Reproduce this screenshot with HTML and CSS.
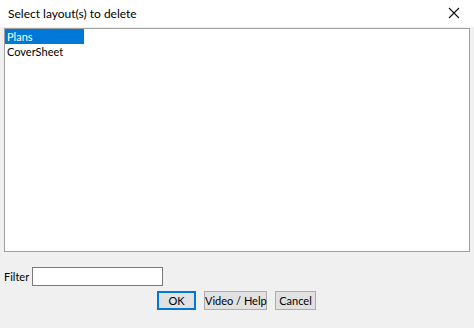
FILE: index.html
```html
<!DOCTYPE html>
<html>
<head>
<meta charset="utf-8">
<link rel="stylesheet" href="styles.css">
</head>
<body>
<div class="window">
  <div class="titlebar">
    <span class="title">Select layout(s) to delete</span>
    <svg class="close" width="12" height="12" viewBox="0 0 12 12"><path d="M1 1 L11 11 M11 1 L1 11" stroke="#111" stroke-width="1.1" fill="none"/></svg>
  </div>
  <div class="content">
    <div class="listbox">
      <div class="item selected">Plans</div>
      <div class="item">CoverSheet</div>
    </div>
    <div class="filter-row">
      <label class="filter-label">Filter</label>
      <div class="filter-input"></div>
    </div>
    <div class="button-row">
      <div class="btn default">OK</div>
      <div class="btn help">Video / Help</div>
      <div class="btn cancel">Cancel</div>
    </div>
  </div>
</div>
</body>
</html>
```
FILE: styles.css
```css
html, body {
  margin: 0;
  padding: 0;
}
body {
  font-family: Lato, "Noto Sans", sans-serif;
  font-size: 11px;
  color: #000;
  background: #f0f0f0;
  width: 474px;
  height: 328px;
  overflow: hidden;
}
.window {
  width: 474px;
  height: 328px;
  display: flex;
  flex-direction: column;
  background: #f0f0f0;
}
.titlebar {
  height: 27px;
  background: #fff;
  display: flex;
  align-items: center;
  justify-content: space-between;
  padding: 0 14px 0 8px;
  flex-shrink: 0;
}
.title {
  font-size: 12px;
  margin-top: -1px;
}
.close {
  margin-top: -1px;
}
.content {
  display: flex;
  flex-direction: column;
  padding: 1px 4px 0 4px;
}
.listbox {
  width: 464px;
  height: 222px;
  background: #fff;
  border: 1px solid #a0a0a0;
}
.item {
  height: 15px;
  line-height: 15px;
  padding-left: 2px;
  width: 77px;
  white-space: nowrap;
}
.item.selected {
  background: #0078d7;
  color: #fff;
}
.filter-row {
  display: flex;
  align-items: center;
  margin-top: 15px;
  height: 19px;
}
.filter-label {
  width: 28px;
}
.filter-input {
  width: 129px;
  height: 17px;
  background: #fff;
  border: 1px solid #7a7a7a;
}
.button-row {
  display: flex;
  gap: 8px;
  margin-top: 5px;
  padding-left: 153px;
}
.btn {
  box-sizing: border-box;
  height: 19px;
  line-height: 17px;
  border: 1px solid #adadad;
  background: #e1e1e1;
  text-align: center;
  white-space: nowrap;
}
.btn.default {
  width: 39px;
  border: 1px solid #0078d7;
  box-shadow: inset 0 0 0 1px #0078d7;
}
.btn.help {
  width: 63px;
}
.btn.cancel {
  width: 41px;
}
```
